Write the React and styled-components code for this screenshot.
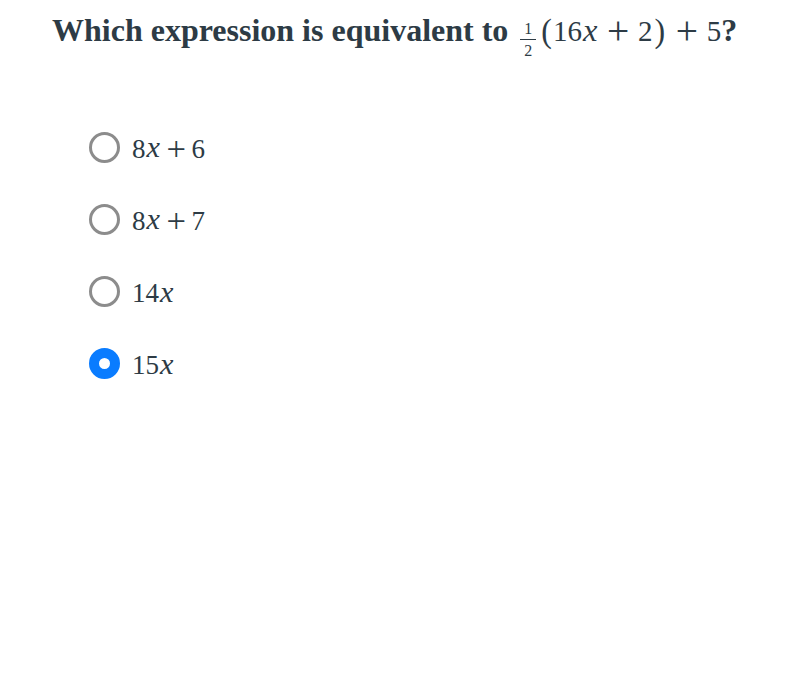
import React from "react";
import styled, { createGlobalStyle } from "styled-components";

const Global = createGlobalStyle`
  html, body { margin: 0; padding: 0; background: #fff; }
  body { font-family: "Liberation Serif", "Times New Roman", serif; color: #2d3b45; }
`;

const Page = styled.div`
  padding: 8px 52px;
`;

const Title = styled.h1`
  margin: 0;
  font-family: "Liberation Serif", serif;
  font-weight: bold;
  font-size: 32px;
  line-height: 44px;
  color: #2d3b45;
  white-space: nowrap;
`;

const MathText = styled.span`
  font-family: "Liberation Serif", serif;
  font-weight: normal;
  font-size: ${(p) => p.size}px;
  color: #2d3b45;
  margin-left: ${(p) => p.gapLeft || 0}px;
`;

const Var = styled.i`
  font-style: italic;
  font-family: "Liberation Serif", serif;
  font-size: 1.12em;
  padding-left: 1px;
  margin-right: 1px;
`;

const Op = styled.span`
  display: inline-block;
  font-size: ${(p) => p.scale || 1.28}em;
  line-height: 1;
  vertical-align: -0.07em;
  margin: 0 ${(p) => p.m || 0.16}em;
`;

const Frac = styled.span`
  display: inline-flex;
  flex-direction: column;
  align-items: center;
  font-size: 16px;
  line-height: 1;
  vertical-align: 7px;
  margin: 0 4px 0 0;
`;

const Num = styled.span`
  padding: 0 4px 2px;
  border-bottom: 1.5px solid #2d3b45;
`;

const Den = styled.span`
  padding-top: 3px;
`;

const Paren = styled.span`
  display: inline-block;
  font-size: 1.1em;
  line-height: 1;
  transform: scaleY(1.08);
  margin: 0 ${(p) => p.m || 0}px;
`;

const List = styled.div`
  display: flex;
  flex-direction: column;
  gap: 42px;
  margin-top: 73px;
  padding-left: 37px;
`;

const Row = styled.label`
  display: flex;
  align-items: center;
  gap: 12px;
  height: 30px;
`;

const Radio = styled.span`
  width: 31px;
  height: 31px;
  box-sizing: border-box;
  border-radius: 50%;
  border: ${(p) => (p.checked ? "10px solid #0a7cff" : "3px solid #8c8c8c")};
  background: #fff;
  flex: none;
`;

const OptionText = styled(MathText)`
  line-height: 30px;
  padding-top: 2px;
`;

const options = [
  [<>8<Var>x</Var><Op>+</Op>6</>, false],
  [<>8<Var>x</Var><Op>+</Op>7</>, false],
  [<>14<Var>x</Var></>, false],
  [<>15<Var>x</Var></>, true],
];

export default function App() {
  return (
    <Page>
      <Global />
      <Title>
        Which expression is equivalent to{" "}
        <MathText size={29} gapLeft={4}>
          <Frac>
            <Num>1</Num>
            <Den>2</Den>
          </Frac>
          <Paren m={1}>(</Paren>16<Var>x</Var>
          <Op scale={1.36} m={0.22}>+</Op>2<Paren m={2}>)</Paren>
          <Op scale={1.36} m={0.22}>+</Op>5
        </MathText>
        ?
      </Title>
      <List>
        {options.map(([content, checked], i) => (
          <Row key={i}>
            <Radio checked={checked} />
            <OptionText size={27}>{content}</OptionText>
          </Row>
        ))}
      </List>
    </Page>
  );
}
